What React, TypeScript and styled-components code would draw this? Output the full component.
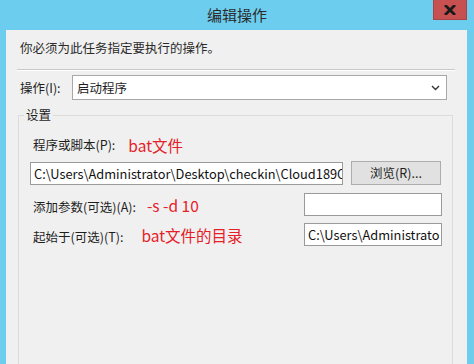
import React from "react";
import styled, { createGlobalStyle } from "styled-components";

const Global = createGlobalStyle`
  html, body {
    margin: 0;
    padding: 0;
    background: #6ccdee;
  }
  * {
    box-sizing: border-box;
  }
`;

const Frame = styled.div`
  width: 474px;
  height: 364px;
  display: flex;
  flex-direction: column;
  background: #6ccdee;
  font-family: "Noto Sans CJK SC", "Microsoft YaHei", sans-serif;
  color: #1e1e1e;
  overflow: hidden;
`;

const TitleBar = styled.div`
  height: 30px;
  flex: none;
  display: grid;
  grid-template-columns: 1fr auto 1fr;
  align-items: start;
`;

const Title = styled.div`
  grid-column: 2;
  margin-top: 5px;
  font-size: 15px;
  line-height: 20px;
  color: #2b2b2b;
`;

const CloseButton = styled.div`
  grid-column: 3;
  justify-self: end;
  width: 34px;
  height: 20px;
  margin-right: 7px;
  background: #c75050;
  border: 1px solid #a94444;
  border-top: none;
  display: flex;
  align-items: center;
  justify-content: center;
`;

const Body = styled.div`
  flex: 1;
  margin: 0 7px 0 6px;
  background: #f0f0f0;
  display: flex;
  flex-direction: column;
  font-size: 12.5px;
`;

const Desc = styled.div`
  padding: 10px 0 0 14px;
  line-height: 16px;
  color: #2a2a2a;
`;

const Divider = styled.div`
  height: 2px;
  margin: 13px 12px 0 11px;
  border-top: 1px solid #c8c8c8;
  border-bottom: 1px solid #ffffff;
`;

const ActionRow = styled.div`
  display: flex;
  align-items: center;
  margin-top: 4px;
  padding-left: 14px;
`;

const ActionLabel = styled.span`
  width: 52px;
  line-height: 16px;
`;

const Select = styled.div`
  width: 375px;
  height: 25px;
  border: 1px solid #a8a8a8;
  background: #ffffff;
  display: flex;
  align-items: center;
  justify-content: space-between;
  padding: 0 6px 0 4px;
  line-height: 16px;
`;

const Group = styled.fieldset`
  flex: 1;
  margin: 7px 14px 0 12px;
  padding: 0 10px 0 11px;
  border: 1px solid #dcdcdc;
  border-bottom: none;
  min-width: 0;
`;

const Legend = styled.legend`
  padding: 0 2px;
  margin-left: -6px;
  line-height: 16px;
`;

const LabelLine = styled.div<{ $top: number }>`
  display: flex;
  align-items: center;
  margin-top: ${({ $top }) => $top}px;
  padding-left: 3px;
  height: 20px;
`;

const FieldLabel = styled.span`
  line-height: 16px;
  white-space: nowrap;
`;

const Note = styled.span<{ $gap: number }>`
  margin-left: ${({ $gap }) => $gap}px;
  color: #e52028;
  font-size: 15.5px;
  line-height: 20px;
  white-space: nowrap;
`;

const ProgramRow = styled.div`
  display: flex;
  align-items: center;
  gap: 8px;
  margin-top: 6px;
`;

const TextBox = styled.div<{ $width: number }>`
  width: ${({ $width }) => $width}px;
  height: 23px;
  flex: none;
  border: 1px solid #9a9a9a;
  background: #ffffff;
  padding: 0 2px 0 3px;
  font-size: 12.8px;
  line-height: 21px;
  white-space: nowrap;
  overflow: hidden;
  color: #111;
`;

const Button = styled.div`
  width: 90px;
  height: 24px;
  border: 1px solid #adadad;
  background: #e1e1e1;
  display: flex;
  align-items: center;
  justify-content: center;
  line-height: 16px;
`;

const OptRow = styled.div<{ $top: number }>`
  display: flex;
  align-items: center;
  justify-content: space-between;
  margin-top: ${({ $top }) => $top}px;
  padding-left: 3px;
`;

export default function App() {
  return (
    <>
      <Global />
      <Frame>
        <TitleBar>
          <Title>编辑操作</Title>
          <CloseButton>
            <svg width="12" height="10" viewBox="0 0 12 10">
              <path d="M2 1 L10 9 M10 1 L2 9" stroke="#1a1a1a" strokeWidth="2.8" strokeLinecap="square" />
            </svg>
          </CloseButton>
        </TitleBar>
        <Body>
          <Desc>你必须为此任务指定要执行的操作。</Desc>
          <Divider />
          <ActionRow>
            <ActionLabel>操作(I):</ActionLabel>
            <Select>
              <span>启动程序</span>
              <svg width="9" height="6" viewBox="0 0 9 6">
                <path d="M1 1 L4.5 4.5 L8 1" stroke="#333" strokeWidth="1.4" fill="none" />
              </svg>
            </Select>
          </ActionRow>
          <Group>
            <Legend>设置</Legend>
            <LabelLine $top={12}>
              <FieldLabel>程序或脚本(P):</FieldLabel>
              <Note $gap={13}>bat文件</Note>
            </LabelLine>
            <ProgramRow>
              <TextBox $width={313}>C:\Users\Administrator\Desktop\checkin\Cloud189C</TextBox>
              <Button>浏览(R)...</Button>
            </ProgramRow>
            <OptRow $top={8}>
              <FieldLabel>
                添加参数(可选)(A):<Note $gap={11}>-s -d 10</Note>
              </FieldLabel>
              <TextBox $width={138} />
            </OptRow>
            <OptRow $top={7}>
              <FieldLabel>
                起始于(可选)(T):<Note $gap={18}>bat文件的目录</Note>
              </FieldLabel>
              <TextBox $width={138}>C:\Users\Administrato</TextBox>
            </OptRow>
          </Group>
        </Body>
      </Frame>
    </>
  );
}
